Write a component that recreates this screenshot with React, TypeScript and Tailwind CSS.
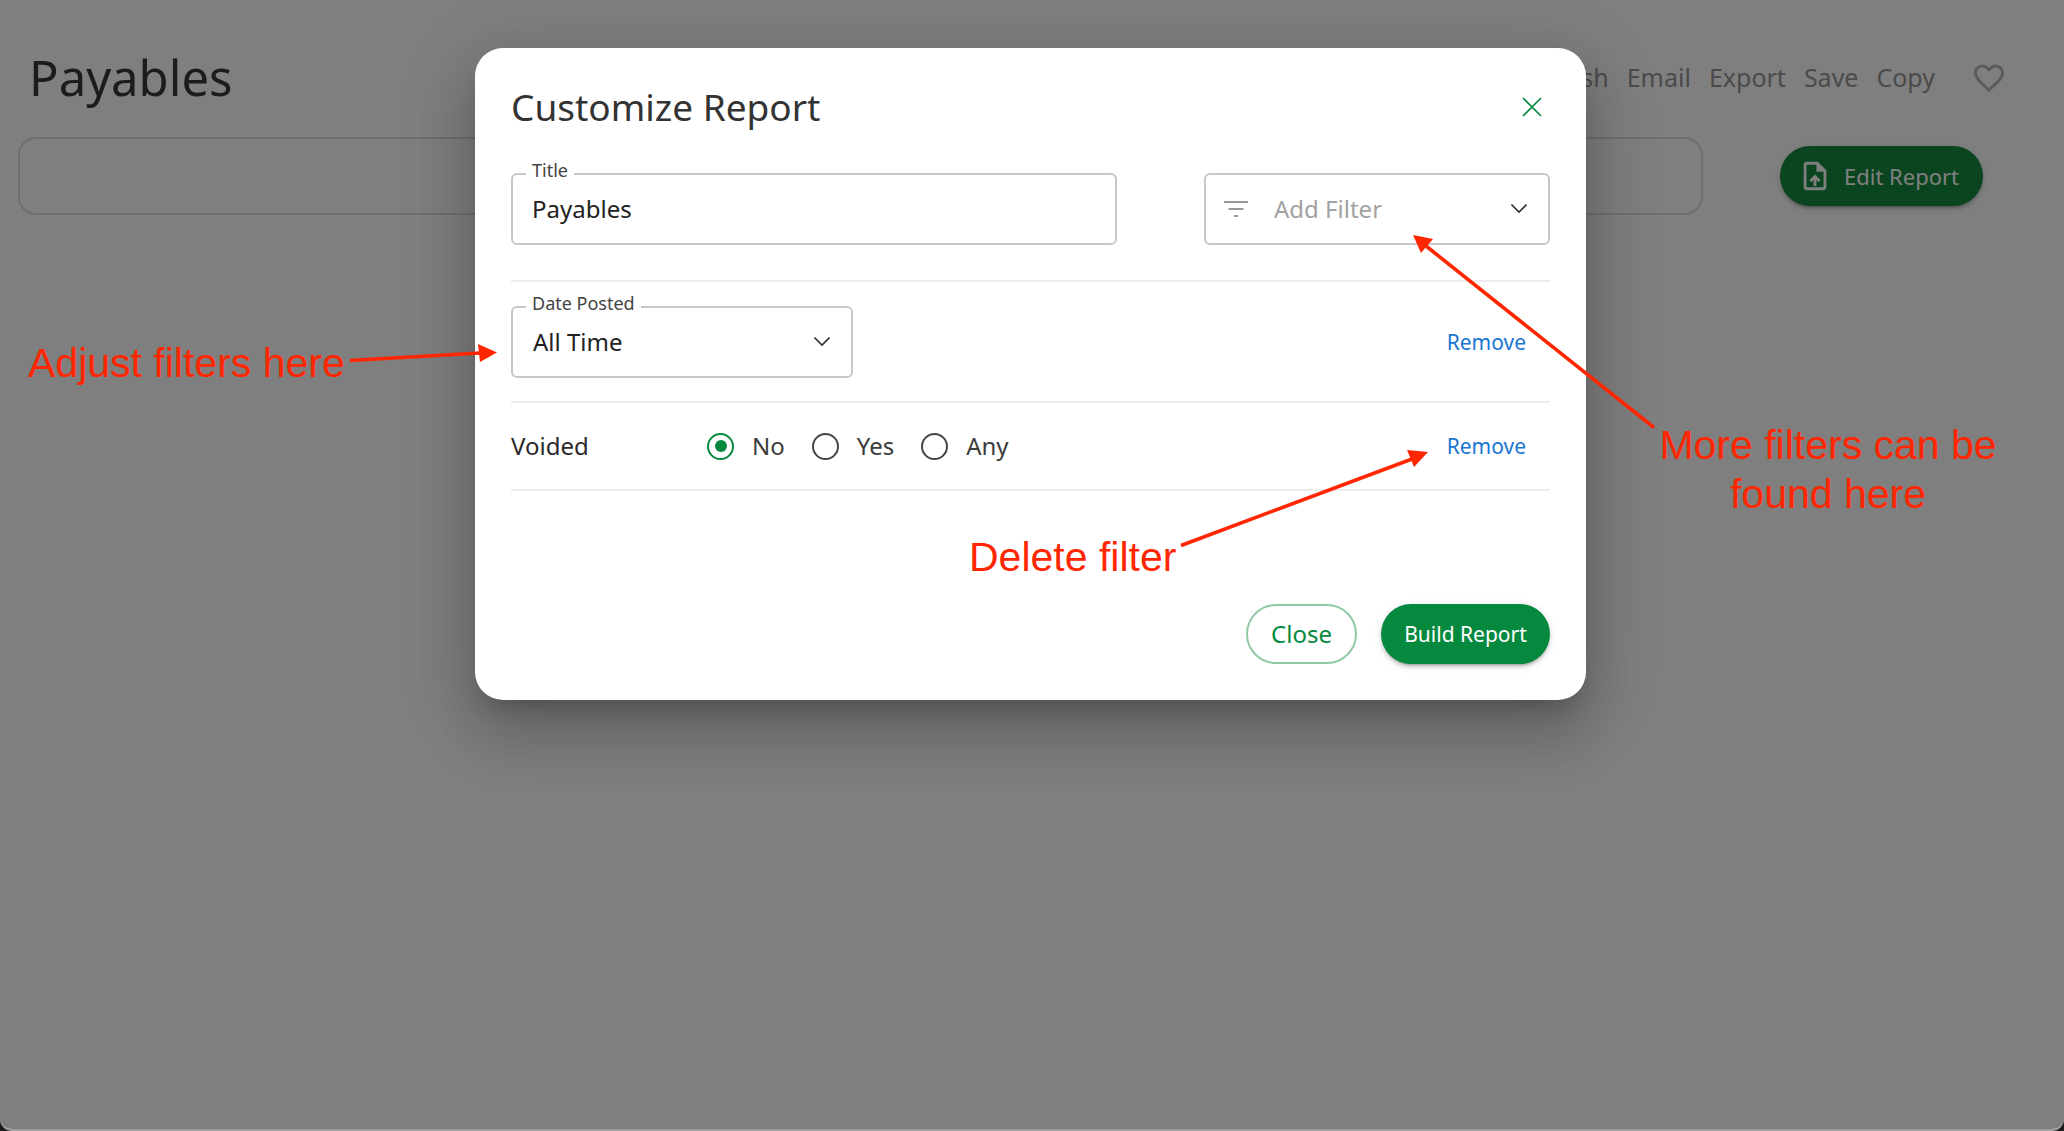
import { useState } from 'react';
import type { ReactNode } from 'react';
import { MdFavoriteBorder, MdOutlineUploadFile } from 'react-icons/md';

const ACTIONS = ['Refresh', 'Email', 'Export', 'Save', 'Copy'];
const VOIDED_OPTIONS = ['No', 'Yes', 'Any'];

function ChevronIcon() {
  return (
    <svg viewBox="0 0 16 16" className="pointer-events-none absolute right-[23px] top-7 size-4" fill="none" stroke="#333" strokeWidth="1.6">
      <path d="M0.5 3.500l7.500 7.500L15.500 3.500" />
    </svg>
  );
}

function FieldLabel({ htmlFor, children }: { htmlFor: string; children: ReactNode }) {
  return (
    <label htmlFor={htmlFor} className="absolute -top-[15px] left-[15px] bg-white px-1.5 text-[18px] leading-6 text-[#444]">
      {children}
    </label>
  );
}

function RemoveButton() {
  return (
    <button type="button" className="ml-auto px-6 text-[21px] leading-8 text-[#1976d2]">
      Remove
    </button>
  );
}

function Annotations() {
  return (
    <div className="pointer-events-none absolute inset-0 font-['Liberation_Sans',Arial,sans-serif] text-[41px] leading-[49px] text-[#ff2600]">
      <svg className="absolute left-0 top-0 overflow-visible" width="1110" height="652" fill="#ff2600" stroke="none">
        <path d="M-125 312.500L5 305" stroke="#ff2600" strokeWidth="3.6" />
        <path d="M3 296L22 304.500L5 314z" />
        <path d="M1179 379.500L951 198" stroke="#ff2600" strokeWidth="3.6" />
        <path d="M938 187L958 191L946 205z" />
        <path d="M706 497.500L937 411" stroke="#ff2600" strokeWidth="3.6" />
        <path d="M932 402L953 404L939 419z" />
      </svg>
      <p className="absolute -left-[447px] top-[291px] whitespace-nowrap">Adjust filters here</p>
      <p className="absolute left-[494px] top-[485px] whitespace-nowrap">Delete filter</p>
      <p className="absolute left-[1173px] top-[373px] w-[360px] text-center">More filters can be found here</p>
    </div>
  );
}

function CustomizeReportModal() {
  const [title, setTitle] = useState('Payables');
  const [voided, setVoided] = useState('No');

  return (
    <div className="absolute inset-0 flex items-start justify-center bg-black/50 pr-[3px] pt-12">
      <div className="relative w-full max-w-[1111px]">
        <div
          role="dialog"
          aria-labelledby="modal-title"
          className="rounded-[28px] bg-white px-9 pb-9 pt-7 shadow-[0_16px_22px_-10px_rgba(0,0,0,0.2),0_36px_57px_4px_rgba(0,0,0,0.14),0_14px_69px_12px_rgba(0,0,0,0.12)]"
        >
          <div className="mb-[35px] flex h-[62px] items-center justify-between">
            <h2 id="modal-title" className="text-[37px] text-[#333]">Customize Report</h2>
            <button type="button" aria-label="Close dialog" className="p-2">
              <svg viewBox="0 0 20 20" className="size-5" fill="none" stroke="#05893e" strokeWidth="1.6">
                <path d="M1 1l18 18M19 1L1 19" />
              </svg>
            </button>
          </div>

          {/* Title + add filter */}
          <div className="flex gap-[87px] border-b-2 border-[#ededed] pb-[35px]">
            <div className="relative flex-1">
              <FieldLabel htmlFor="title">Title</FieldLabel>
              <input
                id="title"
                type="text"
                value={title}
                onChange={(e) => setTitle(e.target.value)}
                className="h-[72px] w-full rounded-md border-2 border-[#c8c8c8] px-[19px] pb-0.5 text-[24px] text-[#222]"
              />
            </div>
            <div className="relative w-[346px]">
              <svg viewBox="0 0 24 16" className="pointer-events-none absolute left-5 top-7 h-4 w-6" fill="none" stroke="#777" strokeWidth="1.6">
                <path d="M0 1h24M4.500 8h15M10 15h4" />
              </svg>
              <select
                aria-label="Add Filter"
                className="h-[72px] w-full appearance-none rounded-md border-2 border-[#c8c8c8] bg-transparent pl-[68px] text-[24px] text-[#a2a2a2]"
              >
                <option>Add Filter</option>
              </select>
              <ChevronIcon />
            </div>
          </div>

          {/* Active filters */}
          <div className="flex items-center border-b-2 border-[#ededed] pb-[23px] pt-6">
            <div className="relative w-[342px]">
              <FieldLabel htmlFor="date-posted">Date Posted</FieldLabel>
              <select
                id="date-posted"
                className="h-[72px] w-full appearance-none rounded-md border-2 border-[#c8c8c8] bg-transparent pl-5 text-[24px] text-[#222]"
              >
                <option>All Time</option>
              </select>
              <ChevronIcon />
            </div>
            <RemoveButton />
          </div>

          <div className="flex h-[88px] items-center border-b-2 border-[#ededed]">
            <span id="voided-label" className="w-[196px] text-[24px] text-[#2a2a2a]">Voided</span>
            <div role="radiogroup" aria-labelledby="voided-label" className="flex gap-[27px]">
              {VOIDED_OPTIONS.map((option) => (
                <label key={option} className="flex items-center gap-[18px] text-[24px] text-[#3c3c3c]">
                  <input
                    type="radio"
                    name="voided"
                    checked={voided === option}
                    onChange={() => setVoided(option)}
                    className="grid size-[27px] appearance-none place-items-center rounded-full border-2 border-[#444] checked:border-[#05893e] checked:before:size-3 checked:before:rounded-full checked:before:bg-[#05893e]"
                  />
                  {option}
                </label>
              ))}
            </div>
            <RemoveButton />
          </div>

          <div className="mt-[113px] flex justify-end gap-6">
            <button type="button" className="h-[60px] w-[111px] rounded-full border-2 border-[#92c9a5] text-[24px] text-[#05893e]">
              Close
            </button>
            <button
              type="button"
              className="h-[60px] w-[169px] rounded-full bg-[#05893e] pt-0.5 text-[21px] text-white shadow-[0_4px_2px_-3px_rgba(0,0,0,0.2),0_3px_3px_rgba(0,0,0,0.14),0_2px_8px_rgba(0,0,0,0.12)]"
            >
              Build Report
            </button>
          </div>
        </div>
        <Annotations />
      </div>
    </div>
  );
}

export default function App() {
  return (
    <div className="flex min-h-screen bg-[#1a1a1a] font-['Noto_Sans',sans-serif]">
      <div className="relative flex-1 overflow-hidden rounded-b-xl border-b-2 border-[#a0a0a0] bg-white pt-[42px]">
        <header className="flex h-[72px] items-center justify-between pl-[29px] pr-[57px]">
          <h1 className="text-[49px] text-[#383838]">Payables</h1>
          <nav className="flex items-center gap-[18px] text-[25px] text-[#969696]">
            {ACTIONS.map((action) => (
              <button key={action} type="button">{action}</button>
            ))}
            <button type="button" aria-label="Favorite" className="ml-[18px] text-[#b8b8b8]">
              <MdFavoriteBorder className="size-9" />
            </button>
          </nav>
        </header>

        <div className="mt-[23px] flex items-center pl-[18px] pr-[81px]">
          <div className="mr-[77px] h-[78px] flex-1 rounded-[18px] border-2 border-[#dedede]" />
          <button
            type="button"
            className="flex h-[60px] w-[203px] items-center justify-center gap-3 rounded-full bg-[#148a3e] pr-1.5 text-[22px] text-white shadow-[0_4px_2px_-3px_rgba(0,0,0,0.2),0_3px_3px_rgba(0,0,0,0.14),0_2px_8px_rgba(0,0,0,0.12)]"
          >
            <MdOutlineUploadFile className="size-[34px]" />
            Edit Report
          </button>
        </div>

        <CustomizeReportModal />
      </div>
    </div>
  );
}
